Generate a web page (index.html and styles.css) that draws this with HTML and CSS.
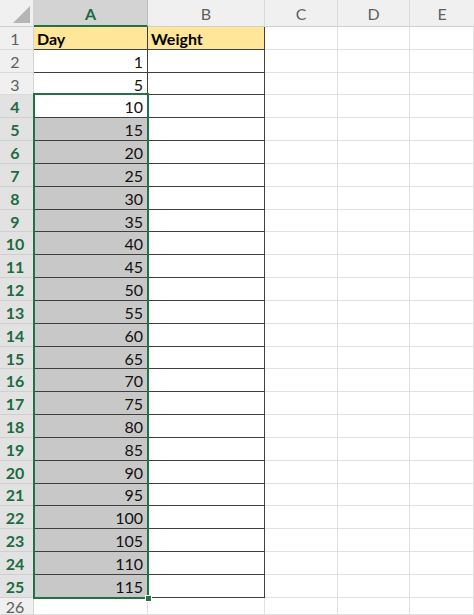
FILE: index.html
```html
<!DOCTYPE html>
<html>
<head>
<meta charset="utf-8">
<link rel="stylesheet" href="styles.css">
</head>
<body>
<div class="sheet">
  <div class="corner"><svg width="17" height="17" viewBox="0 0 17 17"><polygon points="0,17 17,0 17,17" fill="#b5b5b5"/></svg></div>
  <div class="ch sel">A</div><div class="ch">B</div><div class="ch">C</div><div class="ch">D</div><div class="ch last">E</div>

  <div class="rh">1</div><div class="c box hdr">Day</div><div class="c box hdr">Weight</div><div class="c"></div><div class="c"></div><div class="c"></div>
  <div class="rh">2</div><div class="c box num">1</div><div class="c box"></div><div class="c"></div><div class="c"></div><div class="c"></div>
  <div class="rh">3</div><div class="c box num">5</div><div class="c box"></div><div class="c"></div><div class="c"></div><div class="c"></div>
  <div class="rh sel">4</div><div class="c box num">10</div><div class="c box"></div><div class="c"></div><div class="c"></div><div class="c"></div>
  <div class="rh sel">5</div><div class="c box num shade">15</div><div class="c box"></div><div class="c"></div><div class="c"></div><div class="c"></div>
  <div class="rh sel">6</div><div class="c box num shade">20</div><div class="c box"></div><div class="c"></div><div class="c"></div><div class="c"></div>
  <div class="rh sel">7</div><div class="c box num shade">25</div><div class="c box"></div><div class="c"></div><div class="c"></div><div class="c"></div>
  <div class="rh sel">8</div><div class="c box num shade">30</div><div class="c box"></div><div class="c"></div><div class="c"></div><div class="c"></div>
  <div class="rh sel">9</div><div class="c box num shade">35</div><div class="c box"></div><div class="c"></div><div class="c"></div><div class="c"></div>
  <div class="rh sel">10</div><div class="c box num shade">40</div><div class="c box"></div><div class="c"></div><div class="c"></div><div class="c"></div>
  <div class="rh sel">11</div><div class="c box num shade">45</div><div class="c box"></div><div class="c"></div><div class="c"></div><div class="c"></div>
  <div class="rh sel">12</div><div class="c box num shade">50</div><div class="c box"></div><div class="c"></div><div class="c"></div><div class="c"></div>
  <div class="rh sel">13</div><div class="c box num shade">55</div><div class="c box"></div><div class="c"></div><div class="c"></div><div class="c"></div>
  <div class="rh sel">14</div><div class="c box num shade">60</div><div class="c box"></div><div class="c"></div><div class="c"></div><div class="c"></div>
  <div class="rh sel">15</div><div class="c box num shade">65</div><div class="c box"></div><div class="c"></div><div class="c"></div><div class="c"></div>
  <div class="rh sel">16</div><div class="c box num shade">70</div><div class="c box"></div><div class="c"></div><div class="c"></div><div class="c"></div>
  <div class="rh sel">17</div><div class="c box num shade">75</div><div class="c box"></div><div class="c"></div><div class="c"></div><div class="c"></div>
  <div class="rh sel">18</div><div class="c box num shade">80</div><div class="c box"></div><div class="c"></div><div class="c"></div><div class="c"></div>
  <div class="rh sel">19</div><div class="c box num shade">85</div><div class="c box"></div><div class="c"></div><div class="c"></div><div class="c"></div>
  <div class="rh sel">20</div><div class="c box num shade">90</div><div class="c box"></div><div class="c"></div><div class="c"></div><div class="c"></div>
  <div class="rh sel">21</div><div class="c box num shade">95</div><div class="c box"></div><div class="c"></div><div class="c"></div><div class="c"></div>
  <div class="rh sel">22</div><div class="c box num shade">100</div><div class="c box"></div><div class="c"></div><div class="c"></div><div class="c"></div>
  <div class="rh sel">23</div><div class="c box num shade">105</div><div class="c box"></div><div class="c"></div><div class="c"></div><div class="c"></div>
  <div class="rh sel">24</div><div class="c box num shade">110</div><div class="c box"></div><div class="c"></div><div class="c"></div><div class="c"></div>
  <div class="rh sel">25</div><div class="c box num shade">115</div><div class="c box"></div><div class="c"></div><div class="c"></div><div class="c"></div>
  <div class="rh last">26</div><div class="c"></div><div class="c"></div><div class="c"></div><div class="c"></div><div class="c"></div>

  <div class="selection"><span class="handle"></span></div>
</div>
</body>
</html>
```
FILE: styles.css
```css
* { box-sizing: border-box; }
html, body {
  margin: 0;
  padding: 0;
  background: #ffffff;
  overflow: hidden;
}
body {
  width: 474px;
  height: 615px;
  font-family: Lato, "Liberation Sans", sans-serif;
}
.sheet {
  display: grid;
  grid-template-columns: 34px 114px 117px 73px 72px 1fr;
  grid-template-rows: 27px repeat(25, 22.84px) 17px;
  width: 474px;
  height: 615px;
  position: relative;
}
.corner {
  background: #f0f0f0;
  border-right: 1px solid #d4d4d4;
  border-bottom: 1px solid #cfcfcf;
  display: flex;
  align-items: flex-end;
  justify-content: flex-end;
  padding: 0 3px 3px 0;
}
.corner svg { display: block; }
.ch {
  background: #f0f0f0;
  border-right: 1px solid #d9d9d9;
  border-bottom: 1px solid #cfcfcf;
  color: #5f5f5f;
  font-size: 16px;
  display: flex;
  align-items: center;
  justify-content: center;
  padding-top: 1px;
}
.ch.sel {
  background: #d3d3d3;
  color: #1d6b41;
  font-weight: 700;
  border-bottom: 2px solid #217346;
  border-right-color: #bdbdbd;
}
.ch.last { border-right: none; }
.rh {
  background: #f0f0f0;
  border-right: 1px solid #d4d4d4;
  border-bottom: 1px solid #dadada;
  color: #5f5f5f;
  font-size: 16px;
  display: flex;
  align-items: center;
  justify-content: center;
  padding: 1px 3px 0 0;
}
.rh.last {
  align-items: flex-start;
  padding-top: 1px;
  line-height: 16px;
}
.rh.sel {
  background: #e2e2e2;
  color: #1d6b41;
  font-weight: 700;
  border-bottom-color: #cfcfcf;
}
.c {
  border-right: 1px solid #e1e1e1;
  border-bottom: 1px solid #e1e1e1;
  font-size: 16px;
  color: #111;
  display: flex;
  align-items: center;
  padding: 1px 4px 0 3px;
}
.c.box {
  border-right-color: #3f3f3f;
  border-bottom-color: #3f3f3f;
}
.c.hdr {
  background: #ffe699;
  font-weight: 700;
  color: #000;
}
.c.num { justify-content: flex-end; }
.c.shade { background: #c8c8c8; }
.selection {
  position: absolute;
  grid-column: 2 / 3;
  grid-row: 5 / 27;
  top: -2px;
  left: -1px;
  right: -1px;
  bottom: -1px;
  border: 2px solid #217346;
  pointer-events: none;
}
.handle {
  position: absolute;
  right: -5px;
  bottom: -5px;
  width: 7px;
  height: 7px;
  background: #217346;
  border: 1px solid #ffffff;
}
```
